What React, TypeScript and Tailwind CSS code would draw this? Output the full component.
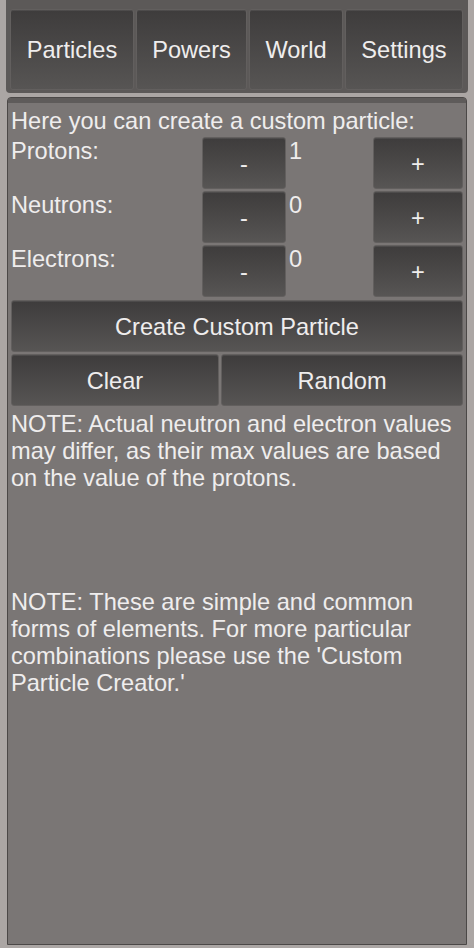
import { useState } from 'react';

const btn =
  'flex items-center justify-center rounded-[3px] border border-[#625f5e] bg-gradient-to-b from-[#3e3c3c] to-[#575554] pt-[2px] text-[23.6px] leading-[27px] text-[#efeded] shadow-[inset_0_1px_0_rgba(255,255,255,0.08)]';

const tabs = [
  { label: 'Particles', w: 'w-[124px]' },
  { label: 'Powers', w: 'w-[111px]' },
  { label: 'World', w: 'w-[94px]' },
  { label: 'Settings', w: 'w-[118px]' },
];

export default function App() {
  const [counts, setCounts] = useState({ Protons: 1, Neutrons: 0, Electrons: 0 });

  const change = (key: keyof typeof counts, d: number) => {
    setCounts(prev => ({ ...prev, [key]: Math.max(0, prev[key] + d) }));
  };

  return (
    <div
      className="h-[948px] w-[474px] bg-[#aba6a4] text-[#efeded]"
      style={{ fontFamily: '"Liberation Sans", Arial, sans-serif' }}
    >
      {/* top tab bar */}
      <div className="ml-[6px] flex h-[93px] w-[462px] gap-[2px] rounded-b-[4px] bg-[#5c5958] pl-[4px] pt-[9px]">
        {tabs.map(t => (
          <button key={t.label} className={`${btn} h-[81px] ${t.w}`}>
            {t.label}
          </button>
        ))}
      </div>

      {/* main panel */}
      <div className="ml-[7px] mt-[4px] h-[848px] w-[460px] rounded-t-[4px] border border-[#4b4847] bg-[#7a7675]">
        <div className="h-[5px] rounded-t-[3px] bg-[#5e5b5a]" />
        <div className="px-[3px] text-[23.6px] leading-[27px]">
          <p className="mb-[-1px] mt-[5px]">Here you can create a custom particle:</p>

          <div className="mt-[3px] flex flex-col gap-[2px]">
            {(Object.keys(counts) as (keyof typeof counts)[]).map(key => (
              <div key={key} className="flex h-[52px]">
                <span className="w-[191px] pt-[1px]">{key}:</span>
                <button onClick={() => change(key, -1)} className={`${btn} h-[52px] w-[84px]`}>
                  -
                </button>
                <span className="w-[87px] pl-[3px] pt-[1px]">{counts[key]}</span>
                <button onClick={() => change(key, 1)} className={`${btn} h-[52px] w-[90px]`}>
                  +
                </button>
              </div>
            ))}
          </div>

          <button className={`${btn} mt-[3px] h-[52px] w-full`}>Create Custom Particle</button>

          <div className="mt-[2px] flex gap-[2px]">
            <button
              onClick={() => setCounts({ Protons: 1, Neutrons: 0, Electrons: 0 })}
              className={`${btn} h-[52px] w-[208px]`}
            >
              Clear
            </button>
            <button className={`${btn} h-[52px] flex-1`}>Random</button>
          </div>

          <p className="mt-[5px]">
            NOTE: Actual neutron and electron values may differ, as their max values are based on the value of
            the protons.
          </p>

          <p className="mt-[97px]">
            NOTE: These are simple and common forms of elements. For more particular combinations please use
            the 'Custom Particle Creator.'
          </p>
        </div>
      </div>
    </div>
  );
}
